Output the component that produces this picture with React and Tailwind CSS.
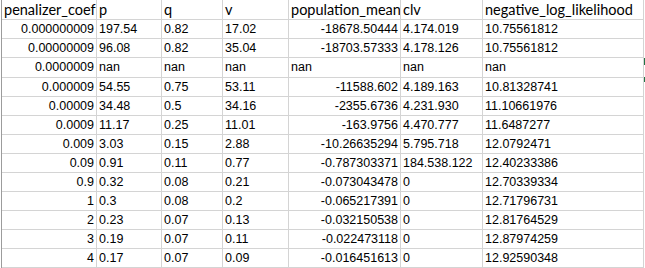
import React from 'react';

const cols = ['penalizer_coef', 'p', 'q', 'v', 'population_mean', 'clv', 'negative_log_likelihood'];

// alignment per column: r = right, l = left
const rows = [
    ['0.000000009', '197.54', '0.82', '17.02', '-18678.50444', '4.174.019', '10.75561812'],
    ['0.00000009', '96.08', '0.82', '35.04', '-18703.57333', '4.178.126', '10.75561812'],
    ['0.0000009', 'nan', 'nan', 'nan', 'nan', 'nan', 'nan'],
    ['0.000009', '54.55', '0.75', '53.11', '-11588.602', '4.189.163', '10.81328741'],
    ['0.00009', '34.48', '0.5', '34.16', '-2355.6736', '4.231.930', '11.10661976'],
    ['0.0009', '11.17', '0.25', '11.01', '-163.9756', '4.470.777', '11.6487277'],
    ['0.009', '3.03', '0.15', '2.88', '-10.26635294', '5.795.718', '12.0792471'],
    ['0.09', '0.91', '0.11', '0.77', '-0.787303371', '184.538.122', '12.40233386'],
    ['0.9', '0.32', '0.08', '0.21', '-0.073043478', '0', '12.70339334'],
    ['1', '0.3', '0.08', '0.2', '-0.065217391', '0', '12.71796731'],
    ['2', '0.23', '0.07', '0.13', '-0.032150538', '0', '12.81764529'],
    ['3', '0.19', '0.07', '0.11', '-0.022473118', '0', '12.87974259'],
    ['4', '0.17', '0.07', '0.09', '-0.016451613', '0', '12.92590348'],
];

const isRight = (ci, val) => (ci === 0 || ci === 4) && val !== 'nan';

export default function App() {
    return (
        <div className="relative w-[645px] h-[268px] bg-white overflow-hidden">
            <div className="ml-[1px] border-l border-[#9c9c9c] grid grid-cols-[95px_65px_61px_66px_112px_82px_161px] w-[643px]">
                {cols.map((c) => (
                    <div
                        key={c}
                        className="h-[20px] border-r border-b border-[#d4d4d4] px-[2px] overflow-hidden whitespace-nowrap text-[14.5px] leading-[19px] text-black font-['Lato',sans-serif]"
                    >
                        {c}
                    </div>
                ))}
                {rows.map((r, ri) =>
                    r.map((v, ci) => (
                        <div
                            key={ri + '-' + ci}
                            className={`${ri === 2 ? 'h-[20px]' : 'h-[19px]'} border-r border-b border-[#d4d4d4] px-[2px] overflow-hidden whitespace-nowrap text-[12.5px] leading-[18px] text-black font-['Liberation_Sans',sans-serif] ${isRight(ci, v) ? 'text-right' : 'text-left'}`}
                        >
                            {v}
                        </div>
                    ))
                )}
            </div>
            <div className="absolute left-[644px] top-[58px] w-[1px] h-[7px] bg-[#217346]" />
            <div className="absolute left-[644px] top-[77px] w-[1px] h-[5px] bg-[#217346]" />
        </div>
    );
}
